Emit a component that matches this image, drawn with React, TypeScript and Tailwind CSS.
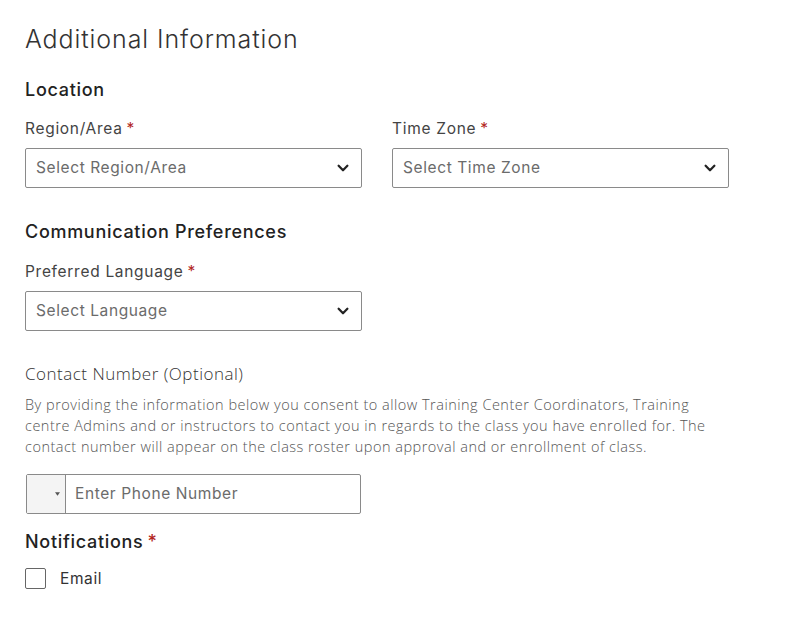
import React from "react";

const Chevron = () => (
  <svg width="14" height="14" viewBox="0 0 16 16" fill="none" stroke="#222" strokeWidth="2.6" strokeLinecap="round" strokeLinejoin="round">
    <path d="M3 5.5l5 5 5-5" />
  </svg>
);

const Req = () => <span className="ml-[4px] text-[#b3261e]">*</span>;

function SelectBox({ placeholder }: { placeholder: string }) {
  return (
    <div className="flex h-[40px] w-[337px] items-center justify-between rounded-[2px] border border-[#8a8a8a] bg-white pl-[10px] pr-[11px]">
      <span className="text-[15.5px] tracking-[0.6px] text-[#6b6b6b]">{placeholder}</span>
      <Chevron />
    </div>
  );
}

function Field({ label, placeholder }: { label: string; placeholder: string }) {
  return (
    <div className="flex flex-col">
      <label className="mb-[9px] text-[15.5px] leading-[20px] tracking-[0.7px] text-[#444]">
        {label}
        <Req />
      </label>
      <SelectBox placeholder={placeholder} />
    </div>
  );
}

export default function App() {
  return (
    <div
      className="min-h-[621px] w-[800px] bg-white pl-[25px] pt-[23px] text-[#333]"
      style={{ fontFamily: "Inter, 'Noto Sans', sans-serif" }}
    >
      <h1 className="text-[25px] font-light leading-[32px] tracking-[0.9px] text-[#333]">Additional Information</h1>

      <h2 className="mt-[23px] text-[18px] font-medium leading-[24px] tracking-[0.7px] text-[#222]">Location</h2>
      <div className="mt-[17px] flex gap-[30px]">
        <Field label="Region/Area" placeholder="Select Region/Area" />
        <Field label="Time Zone" placeholder="Select Time Zone" />
      </div>

      <h2 className="mt-[32px] text-[18px] font-medium leading-[24px] tracking-[0.7px] text-[#222]">Communication Preferences</h2>
      <div className="mt-[18px]">
        <Field label="Preferred Language" placeholder="Select Language" />
      </div>

      <div style={{ fontFamily: "'Open Sans', sans-serif" }}>
        <h3 className="mt-[31px] text-[17px] font-light leading-[24px] tracking-[0.5px] text-[#333]">Contact Number (Optional)</h3>
        <p className="mt-[8px] text-[14.5px] font-light leading-[21px] tracking-[0.5px] text-[#555]">
          By providing the information below you consent to allow Training Center Coordinators, Training
          <br />
          centre Admins and or instructors to contact you in regards to the class you have enrolled for. The
          <br />
          contact number will appear on the class roster upon approval and or enrollment of class.
        </p>
      </div>

      <div className="ml-[1px] mt-[17px] flex h-[40px] w-[335px] rounded-[2px] border border-[#8a8a8a]">
        <div className="flex w-[39px] items-center justify-end border-r border-[#8a8a8a] bg-[#f4f4f4] pr-[5px]">
          <svg width="5" height="4" viewBox="0 0 6 4">
            <path d="M0 0h6L3 4z" fill="#555" />
          </svg>
        </div>
        <div className="flex flex-1 items-center pl-[9px] text-[15.5px] tracking-[0.6px] text-[#6b6b6b]">Enter Phone Number</div>
      </div>

      <h2 className="mt-[16px] text-[18px] font-medium leading-[24px] tracking-[0.7px] text-[#222]">
        Notifications
        <Req />
      </h2>
      <label className="mt-[13px] flex items-center gap-[14px]">
        <span className="h-[21px] w-[21px] rounded-[2px] border border-[#666] bg-white" />
        <span className="text-[15.5px] tracking-[0.6px] text-[#333]">Email</span>
      </label>
    </div>
  );
}
